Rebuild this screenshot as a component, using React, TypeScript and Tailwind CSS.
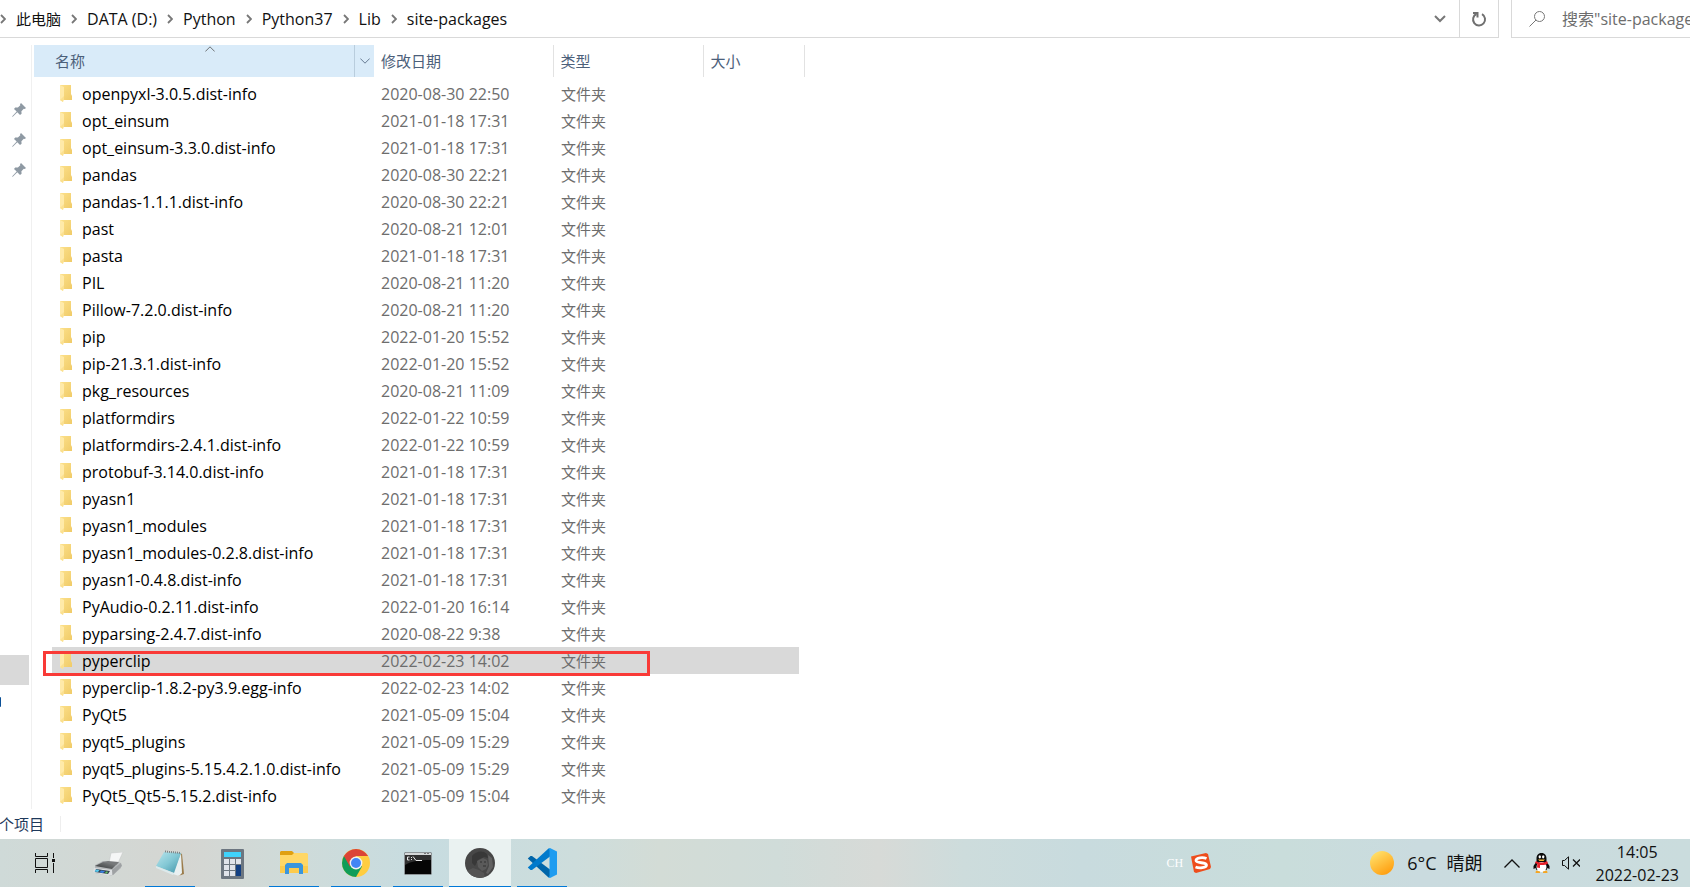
import { type ReactNode } from 'react';

const TYPE_FOLDER = '文件夹';

interface FolderEntry {
  name: string;
  modified: string;
  selected?: boolean;
}

const entries: FolderEntry[] = [
  { name: 'openpyxl-3.0.5.dist-info', modified: '2020-08-30 22:50' },
  { name: 'opt_einsum', modified: '2021-01-18 17:31' },
  { name: 'opt_einsum-3.3.0.dist-info', modified: '2021-01-18 17:31' },
  { name: 'pandas', modified: '2020-08-30 22:21' },
  { name: 'pandas-1.1.1.dist-info', modified: '2020-08-30 22:21' },
  { name: 'past', modified: '2020-08-21 12:01' },
  { name: 'pasta', modified: '2021-01-18 17:31' },
  { name: 'PIL', modified: '2020-08-21 11:20' },
  { name: 'Pillow-7.2.0.dist-info', modified: '2020-08-21 11:20' },
  { name: 'pip', modified: '2022-01-20 15:52' },
  { name: 'pip-21.3.1.dist-info', modified: '2022-01-20 15:52' },
  { name: 'pkg_resources', modified: '2020-08-21 11:09' },
  { name: 'platformdirs', modified: '2022-01-22 10:59' },
  { name: 'platformdirs-2.4.1.dist-info', modified: '2022-01-22 10:59' },
  { name: 'protobuf-3.14.0.dist-info', modified: '2021-01-18 17:31' },
  { name: 'pyasn1', modified: '2021-01-18 17:31' },
  { name: 'pyasn1_modules', modified: '2021-01-18 17:31' },
  { name: 'pyasn1_modules-0.2.8.dist-info', modified: '2021-01-18 17:31' },
  { name: 'pyasn1-0.4.8.dist-info', modified: '2021-01-18 17:31' },
  { name: 'PyAudio-0.2.11.dist-info', modified: '2022-01-20 16:14' },
  { name: 'pyparsing-2.4.7.dist-info', modified: '2020-08-22 9:38' },
  { name: 'pyperclip', modified: '2022-02-23 14:02', selected: true },
  { name: 'pyperclip-1.8.2-py3.9.egg-info', modified: '2022-02-23 14:02' },
  { name: 'PyQt5', modified: '2021-05-09 15:04' },
  { name: 'pyqt5_plugins', modified: '2021-05-09 15:29' },
  { name: 'pyqt5_plugins-5.15.4.2.1.0.dist-info', modified: '2021-05-09 15:29' },
  { name: 'PyQt5_Qt5-5.15.2.dist-info', modified: '2021-05-09 15:04' },
];

const crumbs = ['此电脑', 'DATA (D:)', 'Python', 'Python37', 'Lib', 'site-packages'];

function CrumbChevron({ className }: { className: string }) {
  return (
    <svg viewBox="0 0 6 10" className={className} fill="none" stroke="#777" strokeWidth="1.800" aria-hidden="true">
      <path d="M1 1l4 4-4 4" />
    </svg>
  );
}

function CaretUp({ className }: { className: string }) {
  return (
    <svg viewBox="0 0 16 9" className={className} fill="none" stroke="currentColor" strokeWidth="1.300" aria-hidden="true">
      <path d="M.5 8.500L8 1l7.500 7.500" />
    </svg>
  );
}

function FolderIcon() {
  return (
    <svg viewBox="0 0 12 17" className="h-[17px] w-3 shrink-0" aria-hidden="true">
      <defs>
        <linearGradient id="folder-back" x1="0" y1="0" x2="1" y2="1">
          <stop offset="0" stopColor="#fce08a" />
          <stop offset="1" stopColor="#f0cb68" />
        </linearGradient>
      </defs>
      <path d="M0 0h11v9l1 2v4H2z" fill="url(#folder-back)" />
      <path d="M0 0l4 2v11l-1 4-3-2z" fill="#ffeaa9" />
      <path d="M4 11v2l-1 4-3-2z" fill="#fbe08f" />
    </svg>
  );
}

function PinIcon() {
  return (
    <svg viewBox="0 0 14 14" className="size-[14px]" fill="#8e99a3" aria-hidden="true">
      <path d="M9 0l5 5-1.300 1-.9-.3-2.400 2.500.2 2.600L8 12 5.300 9.200 1 13.500 0 14l.5-1L4.700 8.600 2 6l1.200-1.500 2.700.1 2.400-2.400L8 1.200z" />
    </svg>
  );
}

function RefreshIcon() {
  return (
    <svg viewBox="0 0 16 16" className="size-4" fill="none" stroke="#707070" strokeWidth="2" aria-hidden="true">
      <path d="M11 3.200A6 6 0 1 1 5.500 3" />
      <path d="M2 2h4.500v4.500" />
    </svg>
  );
}

function SearchIcon() {
  return (
    <svg viewBox="0 0 16 16" className="size-4" fill="none" stroke="#777" aria-hidden="true">
      <circle cx="10.500" cy="5.500" r="5" />
      <path d="M7 9L.5 15.500" />
    </svg>
  );
}

function TaskViewIcon() {
  return (
    <svg viewBox="0 0 20 20" className="size-5" fill="none" stroke="#111" aria-hidden="true">
      <path d="M.5 0v3.500h12V0M.5 20v-3.500h12V20M.5 5.500h12v9H.5zM18.500 0v5M18.500 10v10" />
      <path d="M17 6h3v3h-3z" fill="#111" stroke="none" />
    </svg>
  );
}

function PrinterIcon() {
  return (
    <svg viewBox="0 0 31 24" className="h-6 w-[31px]" aria-hidden="true">
      <defs>
        <linearGradient id="printer-top" x1="0" y1="1" x2="1" y2="0">
          <stop offset="0" stopColor="#333536" />
          <stop offset="1" stopColor="#8d9092" />
        </linearGradient>
      </defs>
      <path d="M18 1l12-1-5 11h-9z" fill="#f5f6f6" stroke="#c2c4c4" strokeWidth=".5" />
      <path d="M2 13l8-4 6 1h9l3 1v5l-8 7-4 1-14-3z" fill="#b4b7b9" />
      <path d="M2 14l8-4 15 1-6 6z" fill="url(#printer-top)" />
      <path d="M9 10l6-1 11 1-3 3z" fill="#77797b" />
      <path d="M1 16l18 2v5l-4 1L0 20z" fill="#dde0e2" />
      <path d="M3 17l14 2-2 3-13-2z" fill="#33424f" />
      <path d="M3 17.500l3.500.5-1.500 2-3.500-.5z" fill="#55c8ef" />
      <path d="M8 18.500l4 .5-2 2-3.500-.5z" fill="#3a80e0" />
      <path d="M13 19.500l2 .3-1 1.700-2-.3z" fill="#62c462" />
      <path d="M19 18l9-7 1 3-9 9z" fill="#9ea1a3" />
    </svg>
  );
}

function NotepadIcon() {
  return (
    <svg viewBox="0 0 28 27" className="h-[27px] w-7" aria-hidden="true">
      <defs>
        <linearGradient id="notepad-cover" x1="0" y1="0" x2="1" y2="1">
          <stop offset="0" stopColor="#b9e5ec" />
          <stop offset=".5" stopColor="#83c8d5" />
          <stop offset="1" stopColor="#3f93a8" />
        </linearGradient>
      </defs>
      <path d="M24 3l2 1 2 20-6 2z" fill="#9b7b4a" />
      <path d="M25 3l-8 21 6 2 3-3z" fill="#e9f0f1" />
      <path d="M8 2l17 1-7 20L0 16z" fill="url(#notepad-cover)" />
      <path d="M0 16l18 7-1 2-17-7z" fill="#dceaec" />
      <path d="M9 1.500l16 1.500" stroke="#7b8486" strokeWidth="2" strokeDasharray="1 1" />
    </svg>
  );
}

function CalculatorIcon() {
  return (
    <svg viewBox="0 0 23 30" className="h-[30px] w-[23px]" aria-hidden="true">
      <rect width="23" height="30" rx="1" fill="#6c7680" />
      <rect x="3" y="3" width="17" height="5" fill="#3fd2fb" />
      <path d="M3 10h5v5H3zM9 10h5v5H9zM15 10h5v5h-5zM3 16h5v5H3zM9 16h5v5H9zM3 22h5v5H3zM9 22h5v5H9z" fill="#dfe3ea" />
      <path d="M15 16h5v11h-5z" fill="#123f83" />
    </svg>
  );
}

function ExplorerIcon() {
  return (
    <svg viewBox="0 0 28 24" className="h-6 w-7" aria-hidden="true">
      <path d="M1 0h11l2 2v4H0V1z" fill="#e0a010" />
      <path d="M0 4h12l2-2h13l1 1v19H0z" fill="#ffd766" />
      <path d="M0 15h28v7H0z" fill="#fccb4d" />
      <path d="M5 23V14l2-2h14l2 2v9h-4v-6H9v6z" fill="#3a96dd" />
    </svg>
  );
}

function ChromeIcon() {
  return (
    <svg viewBox="0 0 28 28" className="size-7" aria-hidden="true">
      <circle cx="14" cy="14" r="14" fill="#ffcd40" />
      <path d="M14 14L1.900 7A14 14 0 0 0 14 28l6-10.500z" fill="#109d58" />
      <path d="M1.900 7A14 14 0 0 1 26.100 7H14l-6.100 10.500z" fill="#db4437" />
      <circle cx="14" cy="14" r="6.400" fill="#f1f1f1" />
      <circle cx="14" cy="14" r="5" fill="#4285f4" />
    </svg>
  );
}

function TerminalIcon() {
  return (
    <svg viewBox="0 0 28 23" className="h-[23px] w-7" aria-hidden="true">
      <rect x=".5" y=".5" width="27" height="22" rx="1" fill="#050505" stroke="#8f9598" />
      <path d="M1 1h26v2H1z" fill="#d5d8d9" />
      <path d="M20 1h2v1h-2zM23 1h2v1h-2z" fill="#777" />
      <path d="M1 3h26v5C16 8 7 9 1 13z" fill="#303030" />
      <path d="M5.500 5H3.500v3h2M7.500 5v1M7.500 7v1M9 4.500l3 4M12 8.500h6" stroke="#e6e6e6" fill="none" />
    </svg>
  );
}

function AvatarIcon() {
  return (
    <svg viewBox="0 0 30 30" className="size-[30px]" aria-hidden="true">
      <defs>
        <clipPath id="avatar-clip">
          <circle cx="15" cy="15" r="15" />
        </clipPath>
      </defs>
      <g clipPath="url(#avatar-clip)">
        <path d="M0 0h30v30H0z" fill="#474747" />
        <path d="M7 8c4-5 11-6 15-2l1 4-4-1-6 3-3 6-3-3z" fill="#383838" />
        <path d="M12 13l6-3 4 2 1 5-2 4-4 2-4-4z" fill="#5a5a5a" />
        <path d="M0 24l8-4 6 2 5 3 1 6H0z" fill="#545454" />
        <path d="M23 7l4 3 1 9-5 7-2-1 3-7z" fill="#626262" />
        <path d="M15 14h2M19 14h2M18 18h3" stroke="#303030" />
      </g>
    </svg>
  );
}

function VsCodeIcon() {
  return (
    <svg viewBox="0 0 30 30" className="size-[30px]" aria-hidden="true">
      <path d="M.8 10.500L3.500 8H5l18 13.500V29l-1.500.5z" fill="#0065a9" />
      <path d="M.8 19.500L3.500 22H5L23 8.500V1L21.500.5z" fill="#007acc" />
      <path d="M21.500 .5L23 0l7 3.500v23L23 30l-1.500-.5 1-1.500V2z" fill="#1f9cf0" />
    </svg>
  );
}

function SogouIcon() {
  return (
    <svg viewBox="0 0 20 20" className="size-5" aria-hidden="true">
      <path d="M0 3.500L15 0l2 1 3 13-1 2-14 4-2-1z" fill="#ee4d1c" />
      <path d="M15.500 5.500C12 4 5 4.500 5 7.500c0 3 10.500 1.500 10.500 4.500 0 3-7.500 3.500-11 2" fill="none" stroke="#fff" strokeWidth="2.800" />
    </svg>
  );
}

function SunIcon() {
  return (
    <svg viewBox="0 0 24 24" className="size-6" aria-hidden="true">
      <defs>
        <linearGradient id="sun-fill" x1=".2" y1="0" x2=".8" y2="1">
          <stop offset="0" stopColor="#ffe36e" />
          <stop offset="1" stopColor="#ff9a0a" />
        </linearGradient>
      </defs>
      <circle cx="12" cy="12" r="12" fill="url(#sun-fill)" />
    </svg>
  );
}

function PenguinIcon() {
  return (
    <svg viewBox="0 0 17 20" className="h-5 w-[17px]" aria-hidden="true">
      <path d="M8.500 0C5 0 3.500 2.500 3.500 5.500v3L.5 13v3l2-1 1 2h10l1-2 2 1v-3l-3-4.500v-3C13.500 2.500 12 0 8.500 0z" fill="#0b0b0b" />
      <ellipse cx="8.500" cy="14" rx="5" ry="5" fill="#fff" />
      <path d="M3 17.500l4 1v1.500H2.500zM14 17.500l-4 1v1.500h4.500z" fill="#f5a623" />
      <ellipse cx="6.800" cy="3.800" rx="1.200" ry="1.600" fill="#fff" />
      <ellipse cx="10.200" cy="3.800" rx="1.200" ry="1.600" fill="#fff" />
      <path d="M5 6.500h7l-1.500 1.500h-4z" fill="#f8b62d" />
      <path d="M3 8c3 2 8 2 11 0l1 2.500c-2 1.500-5 1.700-8 1.500v3l-3-.5.3-3.500L2 10z" fill="#e8202a" />
    </svg>
  );
}

function MutedIcon() {
  return (
    <svg viewBox="0 0 18 14" className="h-[14px] w-[18px]" fill="none" stroke="#111" aria-hidden="true">
      <path d="M.5 4.500h2L6.500 .8v12.400L2.500 9.500h-2z" />
      <path d="M11 3.500l7 7M18 3.500l-7 7" strokeWidth="1.300" />
    </svg>
  );
}

interface TaskbarApp {
  label: string;
  icon: ReactNode;
  running?: boolean;
  active?: boolean;
}

const apps: TaskbarApp[] = [
  { label: 'Printer', icon: <PrinterIcon /> },
  { label: 'Notepad', icon: <NotepadIcon />, running: true },
  { label: 'Calculator', icon: <CalculatorIcon /> },
  { label: 'File Explorer', icon: <ExplorerIcon />, running: true },
  { label: 'Chrome', icon: <ChromeIcon />, running: true },
  { label: 'Command Prompt', icon: <TerminalIcon />, running: true },
  { label: 'Profile', icon: <AvatarIcon />, running: true, active: true },
  { label: 'Visual Studio Code', icon: <VsCodeIcon />, running: true },
];

function AddressBar() {
  return (
    <header className="flex h-[38px] shrink-0 text-base text-[#111]">
      <nav aria-label="Path" className="flex min-w-0 flex-1 items-center border-b border-[#d9d9d9]">
        {crumbs.map((crumb, i) => (
          <span key={crumb} className="flex items-center">
            <CrumbChevron className={i === 0 ? 'mr-[10px] h-[10px] w-[6px]' : 'mx-[10px] h-[10px] w-[6px]'} />
            <a href="#" className={i === 0 ? 'text-[15px] leading-6' : 'leading-6'}>
              {crumb}
            </a>
          </span>
        ))}
        <button type="button" aria-label="History" className="ml-auto mr-[13px] text-[#777]">
          <svg viewBox="0 0 12 8" className="h-2 w-3" fill="none" stroke="currentColor" strokeWidth="2" aria-hidden="true">
            <path d="M1 1l5 5 5-5" />
          </svg>
        </button>
      </nav>
      <button
        type="button"
        aria-label="Refresh"
        className="flex w-10 items-center justify-center border-x border-b border-[#d9d9d9]"
      >
        <RefreshIcon />
      </button>
      <label className="ml-3 flex w-[179px] items-center border-b border-l border-[#d9d9d9] pl-[17px]">
        <SearchIcon />
        <input
          type="text"
          aria-label="Search"
          placeholder={'搜索"site-packages"'}
          className="ml-[17px] min-w-0 flex-1 outline-none placeholder:text-[#6d6d6d]"
        />
      </label>
    </header>
  );
}

function NavPane() {
  return (
    <aside className="flex w-8 shrink-0 flex-col border-r border-[#f0f0f0]">
      <div className="mt-[50px] flex flex-col gap-4 pl-3 pt-2">
        <PinIcon />
        <PinIcon />
        <PinIcon />
      </div>
      <div className="mr-[2px] mt-[478px] h-[30px] bg-[#d9d9d9]" />
      <div className="mt-3 h-[10px] w-px rounded-r bg-[#0a4f96]" />
    </aside>
  );
}

function FileTable() {
  return (
    <table className="w-[770px] table-fixed border-collapse text-left">
      <colgroup>
        <col className="w-[18px]" />
        <col className="w-[322px]" />
        <col className="w-[179px]" />
        <col className="w-[150px]" />
        <col className="w-[96px]" />
        <col className="w-[5px]" />
      </colgroup>
      <thead>
        <tr className="h-8 text-[15px] text-[#4c607a]">
          <th colSpan={2} className="relative bg-[#d9ebf9] p-0 font-normal">
            <div className="flex h-8 items-center">
              <button type="button" className="flex-1 pl-[21px] text-left">名称</button>
              <button
                type="button"
                aria-label="Filter by name"
                className="flex h-8 w-5 items-center justify-center border-l border-[#b9cddd]"
              >
                <CaretUp className="h-[6px] w-[10px] rotate-180" />
              </button>
            </div>
            <CaretUp className="absolute left-[171px] top-px h-[6px] w-[10px] text-[#555]" />
          </th>
          <th className="border-r border-[#e2e2e2] p-0 pl-[7px] font-normal">修改日期</th>
          <th className="border-r border-[#e2e2e2] p-0 pl-[7px] font-normal">类型</th>
          <th colSpan={2} className="border-r border-[#e2e2e2] p-0 pl-[7px] font-normal">大小</th>
        </tr>
        <tr className="h-[3px]" />
      </thead>
      <tbody>
        {entries.map((entry) => {
          const fill = entry.selected ? 'bg-[#d9d9d9]' : '';
          return (
            <tr key={entry.name} className="h-[27px]">
              <td className="p-0">
                {entry.selected && (
                  <div className="relative">
                    <div className="absolute -top-[10px] left-[9px] z-10 h-[25px] w-[607px] border-[3px] border-[#f93a37]" />
                  </div>
                )}
              </td>
              <td className={`p-0 ${fill}`}>
                <div className="flex h-[27px] items-center gap-[10px] pl-2 text-base leading-5 text-black">
                  <FolderIcon />
                  {entry.name}
                </div>
              </td>
              <td className={`p-0 pl-[7px] text-base leading-5 text-[#6d6d6d] ${fill}`}>{entry.modified}</td>
              <td className={`p-0 pl-2 text-[15px] leading-5 text-[#6d6d6d] ${fill}`}>{TYPE_FOLDER}</td>
              <td className={`p-0 ${fill}`} />
              <td className="p-0" />
            </tr>
          );
        })}
      </tbody>
    </table>
  );
}

function Taskbar() {
  return (
    <footer className="flex h-12 shrink-0 items-stretch bg-[linear-gradient(to_right,#cfdad8_0%,#d5d6d2_11%,#cfdbd9_17%,#c7dce0_25%,#cddddc_34%,#d3dcd6_39%,#d0dcd9_46%,#d7dad7_52%,#cddcdc_57%,#c8dbde_64%,#c9dddb_76%,#cadbdf_84%,#cadcdd_100%)] pl-4 text-[#111]">
      <button type="button" aria-label="Task view" className="flex w-[61px] items-center justify-center pr-1">
        <TaskViewIcon />
      </button>
      {apps.map((app) => (
        <button
          key={app.label}
          type="button"
          aria-label={app.label}
          className={`flex w-[62px] flex-col items-center ${app.active ? 'bg-[#eaf2f1]' : 'px-[6px]'}`}
        >
          <span className="flex flex-1 items-center justify-center pt-px">{app.icon}</span>
          {app.running && <span className="h-px w-full bg-[#0078d7]" />}
        </button>
      ))}
      <div className="ml-auto flex items-center">
        <span className="font-['Liberation_Serif',serif] text-xs text-white">CH</span>
        <span className="ml-2">
          <SogouIcon />
        </span>
      </div>
      <button type="button" className="ml-[159px] flex items-center text-lg">
        <SunIcon />
        <span className="ml-[13px]">6°C</span>
        <span className="ml-[10px]">晴朗</span>
      </button>
      <button type="button" aria-label="Show hidden icons" className="ml-[21px]">
        <CaretUp className="h-[9px] w-4" />
      </button>
      <div className="ml-[13px] flex items-center gap-3">
        <PenguinIcon />
        <MutedIcon />
      </div>
      <time className="ml-4 mr-[11px] flex flex-col justify-center pt-px text-center text-base leading-[23px]">
        <span>14:05</span>
        <span>2022-02-23</span>
      </time>
    </footer>
  );
}

export default function App() {
  return (
    <div className="flex min-h-screen flex-col overflow-hidden bg-white font-['Open_Sans','Noto_Sans_CJK_SC',sans-serif]">
      <AddressBar />
      <main className="mt-[7px] flex flex-1">
        <NavPane />
        <div className="pl-[2px]">
          <FileTable />
        </div>
      </main>
      <div className="flex h-[30px] shrink-0 items-center text-[15px] text-[#1e395b]">
        <span className="-ml-px border-r border-[#eee] pr-4 leading-4">个项目</span>
      </div>
      <Taskbar />
    </div>
  );
}
